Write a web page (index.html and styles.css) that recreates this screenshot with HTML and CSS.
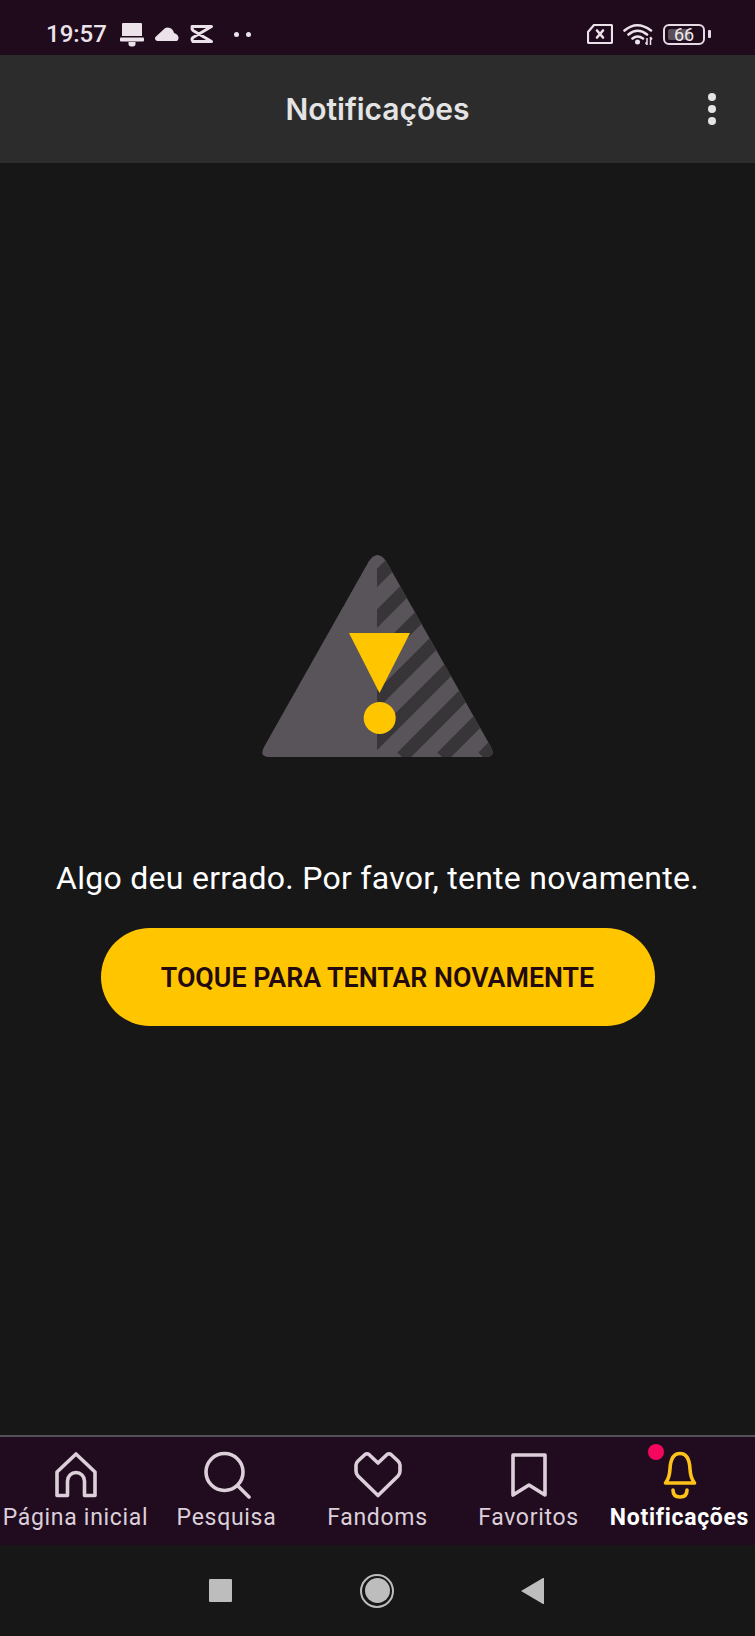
FILE: index.html
```html
<!DOCTYPE html>
<html lang="pt">
<head>
<meta charset="utf-8">
<title>Notificações</title>
<link rel="stylesheet" href="styles.css">
</head>
<body>
<div class="app">
  <div class="status">
    <div class="status-left">
      <span class="time">19:57</span>
      <svg class="ic-note" viewBox="0 0 24 25"><path class="st-fill" d="M3 1h18a1 1 0 0 1 1 1v12H2V2a1 1 0 0 1 1-1zM1 15.500h22a1 1 0 0 1 1 1v2a1 1 0 0 1-1 1H1a1 1 0 0 1-1-1v-2a1 1 0 0 1 1-1zM8.500 20h7v2.500a2.500 2.500 0 0 1-2.500 2h-2a2.500 2.500 0 0 1-2.500-2z"/></svg>
      <svg class="ic-cloud" viewBox="0 0 24 14"><path class="st-fill" d="M2.500 14A2.500 2.500 0 0 1 1 9.500 L8 3Q11-.5 15 1q3 1 4 5 4 1 4.500 4.500.2 3.500-3 3.500z"/></svg>
      <svg class="ic-cut" viewBox="0 0 26 20"><path class="st-cut" d="M3 2.500H22.500L4 13.500Q2 15 4 17.500H22.500M4 2.500Q2 4.500 4 6.500L22.500 17.500"/></svg>
      <span class="more"><i></i><i></i></span>
    </div>
    <div class="status-right">
      <svg class="ic-sim" viewBox="0 0 26 20"><path class="st-line" d="M7 1h17a1 1 0 0 1 1 1v16a1 1 0 0 1-1 1H2a1 1 0 0 1-1-1V8z"/><path class="st-x" d="M10 6.500l6 7M16 6.500l-6 7"/></svg>
      <svg class="ic-wifi" viewBox="0 0 31 23"><path class="st-wifi" d="M1.500 7.500Q14-3 28 7.500M5.500 11.500q9-7.500 18.500 0M9.500 15.500q5-4 10.500 0"/><circle class="st-fill" cx="14.500" cy="19" r="2.500"/><path class="st-thin" d="M24 22v-7M22.500 19.500l1.500 2M27.500 14v8M27.500 14l1.500 2.500"/></svg>
      <div class="battery">
        <div class="battery-body"><span class="battery-level"></span><span class="battery-num">66</span></div>
        <span class="battery-tip"></span>
      </div>
    </div>
  </div>

  <header class="bar">
    <h1 class="bar-title">Notificações</h1>
    <span class="kebab"><i></i><i></i><i></i></span>
  </header>

  <main class="content">
    <svg class="warn" viewBox="0 0 231 202">
      <defs>
        <clipPath id="warn-tri"><path d="M107 6Q115.500-6 124 6L229 192Q234 202 224 202L7 202Q-3 202 2 192Z"/></clipPath>
        <clipPath id="warn-half"><rect x="115" y="0" width="120" height="202"/></clipPath>
      </defs>
      <path class="warn-base" d="M107 6Q115.500-6 124 6L229 192Q234 202 224 202L7 202Q-3 202 2 192Z"/>
      <g clip-path="url(#warn-tri)">
        <g clip-path="url(#warn-half)">
          <path class="warn-stripes" d="M138 0L-12 150M178.700 0L-12 190.700M219.400 0L-12 231.400M260.100 0L58 202M300.800 0L99 202M341.500 0L140 202M382.200 0L180 202M422.900 0L221 202M463.600 0L262 202"/>
        </g>
      </g>
      <path class="warn-mark" d="M87 78H148L117.500 138Z"/>
      <circle class="warn-mark" cx="117.700" cy="163" r="16"/>
    </svg>
    <p class="message">Algo deu errado. Por favor, tente novamente.</p>
    <button class="retry" type="button">TOQUE PARA TENTAR NOVAMENTE</button>
  </main>

  <nav class="tabs">
    <div class="tab">
      <svg class="tab-icon" viewBox="0 0 48 48"><path class="tab-line" d="M5 44.500V21L24 3l19 18v23.500H32.500V30a8.500 8.500 0 0 0-17 0v14.500z"/></svg>
      <span class="tab-label">Página inicial</span>
    </div>
    <div class="tab">
      <svg class="tab-icon" viewBox="0 0 48 48"><circle class="tab-line" cx="21.500" cy="21" r="18.500"/><path class="tab-line" d="M35 35l11 11"/></svg>
      <span class="tab-label">Pesquisa</span>
    </div>
    <div class="tab">
      <svg class="tab-icon" viewBox="0 0 48 48"><path class="tab-line" d="M24 44.500L4 25q-2-2-2-5v-6q0-2 2-4l7-6.500q2-1.500 4 0L24 12l9-8.500q2-1.500 4 0l7 6.500q2 2 2 4v6q0 3-2 5z"/></svg>
      <span class="tab-label">Fandoms</span>
    </div>
    <div class="tab">
      <svg class="tab-icon" viewBox="0 0 48 48"><path class="tab-line" d="M8 4h32v40L24 34 8 44z"/></svg>
      <span class="tab-label">Favoritos</span>
    </div>
    <div class="tab tab-active">
      <span class="tab-badge"></span>
      <svg class="tab-icon" viewBox="0 0 48 48"><path class="tab-line" d="M9.500 32q4-5 4.500-14C14.500 7 18 2.500 24 2.500S33.500 7 34 18q.5 9 4.500 14zM17 39q0 7 7 7t7-7"/></svg>
      <span class="tab-label">Notificações</span>
    </div>
  </nav>

  <div class="sysnav">
    <span class="sys-square"></span>
    <span class="sys-home"><span class="sys-home-dot"></span></span>
    <svg class="sys-back" viewBox="0 0 23 26"><path d="M0 13L22 0a.6.6 0 0 1 1 .5v25a.6.6 0 0 1-1 .5z"/></svg>
  </div>
</div>
</body>
</html>
```

FILE: styles.css
```css
* { box-sizing: border-box; }
html, body { margin: 0; padding: 0; background: #171717; }
.app {
  width: 755px;
  height: 1636px;
  display: flex;
  flex-direction: column;
  font-family: Roboto, "Liberation Sans", sans-serif;
  overflow: hidden;
}

/* status bar */
.status {
  height: 55px;
  flex: none;
  background: #1f0b1c;
  color: #ece2ea;
  display: flex;
  justify-content: space-between;
  align-items: center;
  padding: 13px 44px 0 46px;
}
.status-left, .status-right { display: flex; align-items: center; }
.time { font-size: 24px; font-weight: 500; line-height: 28px; width: 62px; margin-right: 12px; white-space: nowrap; }
.st-fill { fill: #ece2ea; }
.st-line { fill: none; stroke: #ece2ea; stroke-width: 2.2; stroke-linejoin: round; stroke-linecap: round; }
.st-cut { fill: none; stroke: #ece2ea; stroke-width: 3; stroke-linejoin: round; stroke-linecap: round; }
.st-x { fill: none; stroke: #ece2ea; stroke-width: 2.6; stroke-linecap: round; }
.st-wifi { fill: none; stroke: #ece2ea; stroke-width: 2.6; stroke-linecap: round; }
.st-thin { fill: none; stroke: #ece2ea; stroke-width: 1.5; }
.ic-note { width: 24px; height: 25px; margin-right: 11px; }
.ic-cloud { width: 24px; height: 14px; margin-right: 10px; }
.ic-cut { width: 26px; height: 20px; margin-right: 19px; }
.more { display: flex; gap: 7px; }
.more i { width: 5px; height: 5px; border-radius: 50%; background: #ece2ea; display: block; }
.ic-sim { width: 26px; height: 20px; margin-right: 10px; }
.ic-wifi { width: 31px; height: 23px; margin-right: 9px; }
.battery { display: flex; align-items: center; gap: 3px; }
.battery-body {
  position: relative;
  width: 42px;
  height: 21px;
  border: 2px solid #e6dae4;
  border-radius: 6px;
  display: flex;
  align-items: center;
  justify-content: center;
}
.battery-level { position: absolute; left: 3px; top: 3px; bottom: 3px; width: 22px; background: #5a4f58; border-radius: 2px; }
.battery-num { position: relative; font-size: 18px; font-weight: 400; line-height: 17px; color: #f0e8ee; }
.battery-tip { width: 3px; height: 8px; background: #e6dae4; border-radius: 1px; }

/* app bar */
.bar {
  height: 108px;
  flex: none;
  background: #2c2c2c;
  position: relative;
  display: flex;
  align-items: center;
  justify-content: center;
}
.bar-title { margin: 0; font-family: Inter, Roboto, sans-serif; font-size: 30px; font-weight: 600; color: #e4e4e4; line-height: 34px; }
.kebab { position: absolute; right: 39px; top: 38px; display: flex; flex-direction: column; gap: 4px; }
.kebab i { width: 8px; height: 8px; border-radius: 50%; background: #e4e4e4; display: block; }

/* content */
.content {
  flex: 1;
  display: flex;
  flex-direction: column;
  align-items: center;
  padding-top: 392px;
  background: #171717;
}
.warn { width: 231px; height: 202px; flex: none; }
.warn-base { fill: #595459; }
.warn-stripes { fill: none; stroke: #383538; stroke-width: 13; }
.warn-mark { fill: #ffc600; }
.message { margin: 104px 0 0; font-size: 32px; line-height: 34px; letter-spacing: 0.27px; color: #fff; white-space: nowrap; }
.retry {
  margin-top: 33px;
  width: 554px;
  height: 98px;
  border: 0;
  border-radius: 49px;
  background: #ffc600;
  color: #220a0e;
  font-family: inherit;
  font-size: 26.800px;
  font-weight: 600;
  padding: 2px 0 0;
}

/* tabs */
.tabs {
  height: 110px;
  flex: none;
  background: #200c1e;
  border-top: 2px solid #555056;
  display: flex;
}
.tab {
  position: relative;
  width: 151px;
  display: flex;
  flex-direction: column;
  align-items: center;
  padding-top: 14px;
}
.tab-icon { width: 48px; height: 48px; flex: none; }
.tab-line { fill: none; stroke: #dccfda; stroke-width: 3.6; stroke-linejoin: round; stroke-linecap: round; }
.tab-label { font-size: 23px; line-height: 26px; letter-spacing: 0.7px; color: #dccfda; white-space: nowrap; margin-top: 6px; }
.tab-active .tab-line { stroke: #ffc21a; }
.tab-active .tab-label { color: #fff; font-weight: 700; }
.tab-badge { position: absolute; left: 44px; top: 7px; width: 16px; height: 16px; border-radius: 50%; background: #f5075d; }

/* system nav */
.sysnav {
  height: 91px;
  flex: none;
  background: #171717;
  display: flex;
  align-items: center;
  padding-left: 209px;
}
.sys-square { width: 23px; height: 23px; background: #bdbdbd; border-radius: 1px; flex: none; margin-right: 128px; }
.sys-home { width: 34px; height: 34px; border: 2px solid #bdbdbd; border-radius: 50%; display: flex; align-items: center; justify-content: center; flex: none; margin-right: 127px; }
.sys-home-dot { width: 25px; height: 25px; background: #bdbdbd; border-radius: 50%; }
.sys-back { width: 23px; height: 26px; fill: #bdbdbd; flex: none; }
```
